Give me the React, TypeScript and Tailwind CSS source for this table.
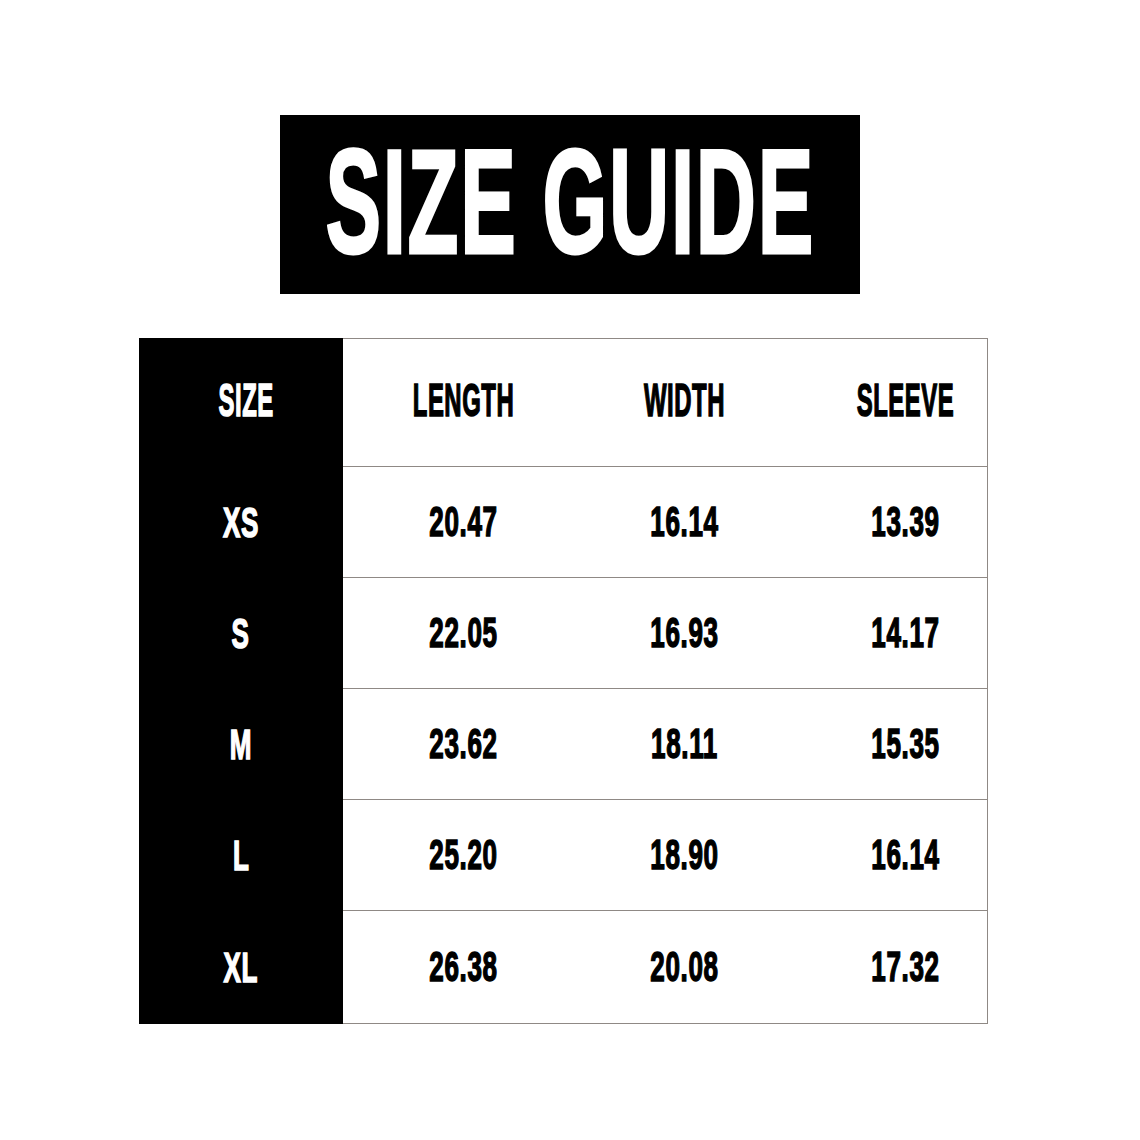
const rows = [
  { size: 'XS', length: '20.47', width: '16.14', sleeve: '13.39' },
  { size: 'S', length: '22.05', width: '16.93', sleeve: '14.17' },
  { size: 'M', length: '23.62', width: '18.11', sleeve: '15.35' },
  { size: 'L', length: '25.20', width: '18.90', sleeve: '16.14' },
  { size: 'XL', length: '26.38', width: '20.08', sleeve: '17.32' },
];

const font = "font-['Liberation_Sans',Arial,sans-serif] font-bold whitespace-nowrap";

function Label({ children, light = false }: { children: React.ReactNode; light?: boolean }) {
  return (
    <span
      className={`${font} inline-block scale-x-[0.52] text-[46px] leading-none tracking-[1px] [-webkit-text-stroke:1.5px_currentColor] ${light ? 'text-white' : 'text-black'}`}
    >
      {children}
    </span>
  );
}

function Num({ children, light = false }: { children: React.ReactNode; light?: boolean }) {
  return (
    <span
      className={`${font} inline-block scale-x-[0.62] text-[42px] leading-none tracking-[1px] [-webkit-text-stroke:1.5px_currentColor] ${light ? 'text-white' : 'text-black'}`}
    >
      {children}
    </span>
  );
}

export default function App() {
  return (
    <div className="flex h-[1140px] w-[1140px] flex-col items-center bg-white pt-[115px]">
      <div className="flex h-[179px] w-[580px] items-center justify-center bg-black pb-[6px]">
        <span
          className={`${font} inline-block scale-x-[0.56] text-[149px] leading-none tracking-[3px] text-white [-webkit-text-stroke:3px_currentColor]`}
        >
          SIZE GUIDE
        </span>
      </div>

      <div className="mt-[44px] ml-[-13px] flex h-[686px] w-[849px] flex-col">
        <div className="flex h-[129px]">
          <div className="flex w-[204px] shrink-0 items-center justify-center bg-black pb-[6px] pl-[10px]">
            <Label light>SIZE</Label>
          </div>
          <div className="grid min-w-0 flex-1 grid-cols-[221px_221px_221px] items-center border-t border-r border-b border-[#8f8985] pb-[6px] pl-[10px] text-center">
            <Label>LENGTH</Label>
            <Label>WIDTH</Label>
            <Label>SLEEVE</Label>
          </div>
        </div>
        {rows.map((r, i) => (
          <div key={r.size} className={`flex ${i === rows.length - 1 ? 'flex-1' : 'h-[111px]'}`}>
            <div className="flex w-[204px] shrink-0 items-center justify-center bg-black">
              <Num light>{r.size}</Num>
            </div>
            <div className="grid min-w-0 flex-1 grid-cols-[221px_221px_221px] items-center border-r border-b border-[#8f8985] pl-[10px] text-center">
              <Num>{r.length}</Num>
              <Num>{r.width}</Num>
              <Num>{r.sleeve}</Num>
            </div>
          </div>
        ))}
      </div>
    </div>
  );
}
